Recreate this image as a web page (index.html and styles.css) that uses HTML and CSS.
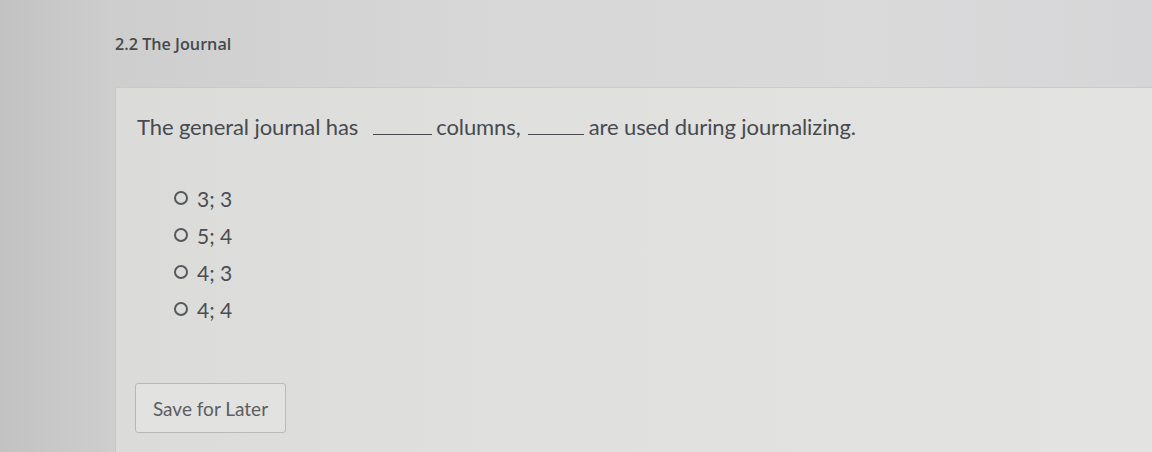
FILE: index.html
```html
<!DOCTYPE html>
<html lang="en">
<head>
<meta charset="utf-8">
<title>2.2 The Journal</title>
<link rel="stylesheet" href="styles.css">
</head>
<body>
  <main class="page">
    <h2 class="section-title">2.2 The Journal</h2>
    <section class="question-card">
      <p class="prompt">The general journal has <span class="blank"></span> columns, <span class="blank short"></span> are used during journalizing.</p>
      <ul class="choices">
        <li class="choice"><span class="radio"></span><span class="label">3; 3</span></li>
        <li class="choice"><span class="radio"></span><span class="label">5; 4</span></li>
        <li class="choice"><span class="radio"></span><span class="label">4; 3</span></li>
        <li class="choice"><span class="radio"></span><span class="label">4; 4</span></li>
      </ul>
      <button class="save-btn" type="button">Save for Later</button>
    </section>
  </main>
</body>
</html>
```

FILE: styles.css
```css
html, body {
  margin: 0;
  height: 100%;
}

body {
  background: linear-gradient(90deg, #c2c2c2 0%, #cecece 10%, #d7d7d7 40%, #dadadb 75%, #d6d6d8 100%);
  font-family: Lato, "Open Sans", sans-serif;
  color: #4a4d50;
  overflow: hidden;
}

.page {
  padding: 34px 0 0 115px;
}

.section-title {
  margin: 0;
  font-family: "Open Sans", sans-serif;
  font-weight: 600;
  font-size: 16.2px;
  line-height: 20px;
  color: #46494c;
}

.question-card {
  margin-top: 33px;
  border: 1px solid #cacaca;
  border-right: none;
  background: linear-gradient(90deg, #dbdbda 0%, #e0e0df 40%, #e3e3e2 100%);
  padding: 24px 0 40px 21px;
  min-height: 400px;
}

.prompt {
  margin: 0;
  font-size: 22px;
  line-height: 30px;
  color: #474a4f;
  letter-spacing: -0.1px;
}

.blank {
  display: inline-block;
  width: 59px;
  border-bottom: 1px solid #474a4f;
  vertical-align: baseline;
  margin: 0 -1px 0 9px;
}

.blank.short {
  width: 56px;
  margin-left: 2px;
}

.choices {
  list-style: none;
  margin: 42px 0 0 0;
  padding: 0 0 0 37px;
  display: flex;
  flex-direction: column;
  gap: 9px;
}

.choice {
  display: flex;
  align-items: center;
  gap: 9px;
  height: 28px;
  font-size: 21px;
  color: #4a4d51;
}

.radio {
  width: 10px;
  height: 10px;
  border: 2px solid #55585c;
  border-radius: 50%;
  flex: none;
}

.save-btn {
  margin-top: 60px;
  display: block;
  width: 151px;
  height: 50px;
  border: 1px solid #b9b9b9;
  border-radius: 3px;
  background: #e2e2e1;
  font-family: Lato, sans-serif;
  font-size: 19px;
  color: #5b5e62;
  padding: 0;
  margin-left: -2px;
}
```
